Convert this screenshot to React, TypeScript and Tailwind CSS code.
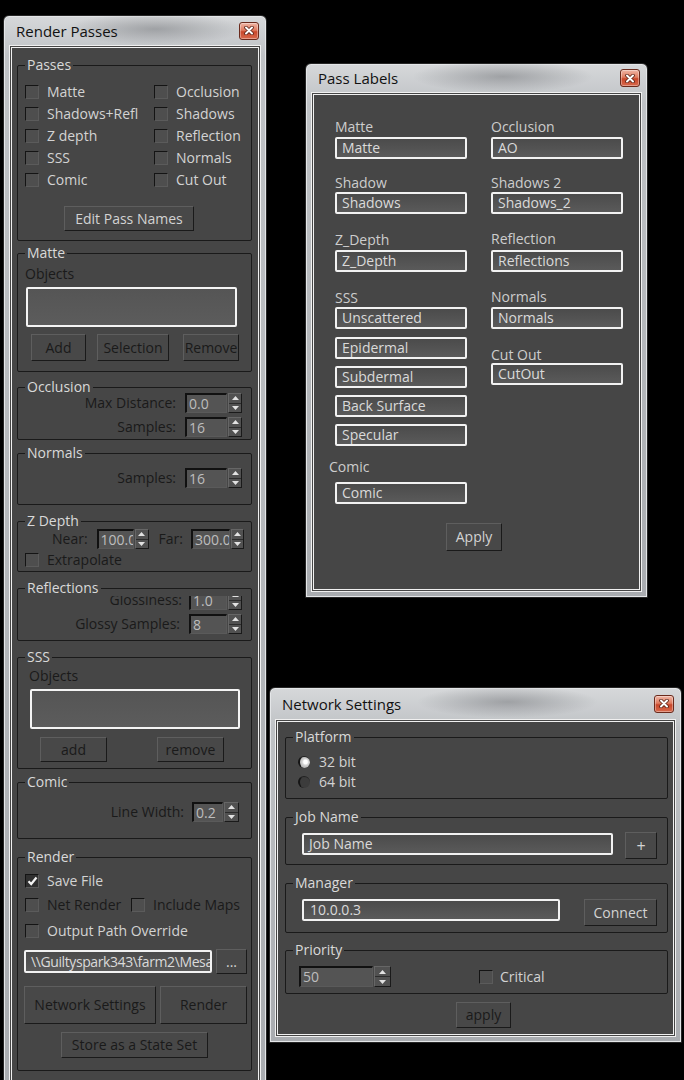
import React from 'react'

const light = 'text-[#d3d3d3]'
const dark = 'text-[#1a1a1a]'

function CloseBtn() {
  return (
    <div className="flex h-[18px] w-[20px] items-center justify-center rounded-[3px] border border-[#6a2a1c] bg-[linear-gradient(180deg,#efb6a6_0%,#df7c61_45%,#c8472b_55%,#d8694c_100%)] shadow-[inset_0_0_0_1px_rgba(255,255,255,0.35)]">
      <svg width="10" height="9" viewBox="0 0 10 9">
        <path d="M2 1.5 L8 7.5 M8 1.5 L2 7.5" stroke="#5a2216" strokeWidth="3.6" strokeLinecap="round" />
        <path d="M2 1.5 L8 7.5 M8 1.5 L2 7.5" stroke="#ffffff" strokeWidth="2" strokeLinecap="round" />
      </svg>
    </div>
  )
}

interface WindowProps {
  title: string
  className: string
  titleH: string
  children: React.ReactNode
}

function Window({ title, className, titleH, children }: WindowProps) {
  return (
    <div
      className={`absolute flex flex-col rounded-t-[6px] border border-[#262626] bg-[linear-gradient(180deg,#d6d8da_0px,#bfc2c5_40px,#a9acb0_100%)] px-[5px] pb-[5px] shadow-[inset_0_0_0_1px_#e4e6e8] ${className}`}
    >
      <div
        className={`flex shrink-0 items-center justify-between bg-[radial-gradient(ellipse_90px_16px_at_58%_45%,rgba(120,122,126,0.55),transparent)] pl-[7px] pr-[2px] ${titleH}`}
      >
        <span className="text-[15px] leading-5 text-[#111]">{title}</span>
        <CloseBtn />
      </div>
      <div className="min-h-0 flex-1 overflow-hidden border-[3px] border-double border-[#f0f0f0] bg-[#464646]">
        {children}
      </div>
    </div>
  )
}

function Group({ label, className, children }: { label: string; className?: string; children?: React.ReactNode }) {
  return (
    <fieldset className={`shrink-0 rounded-[2px] border border-[#1a1a1a] ${className ?? ''}`}>
      <legend className="ml-[7px] px-[2px] text-[14px] leading-4 text-[#d9d9d9]">{label}</legend>
      {children}
    </fieldset>
  )
}

function Check({ checked }: { checked?: boolean }) {
  return (
    <span
      className={`flex h-[14px] w-[14px] shrink-0 items-center justify-center border-t border-l border-r border-b border-t-[#141414] border-l-[#141414] border-r-[#5b5b5b] border-b-[#5b5b5b] ${checked ? 'bg-[#303030]' : 'bg-[#4e4e4e]'}`}
    >
      {checked && (
        <svg width="11" height="10" viewBox="0 0 11 10">
          <path d="M1.5 5.2 L4.2 8 L9.5 1.5" fill="none" stroke="#f4f4f4" strokeWidth="2.2" />
        </svg>
      )}
    </span>
  )
}

function Radio({ on }: { on?: boolean }) {
  return (
    <span
      className={`h-[12px] w-[12px] shrink-0 rounded-full border-l-2 border-t border-l-[#151515] border-t-[#222] ${on ? 'bg-[radial-gradient(circle_at_55%_45%,#ffffff_0_22%,#d4d4d4_40%,#9a9a9a_100%)]' : 'bg-[#3c3c3c]'}`}
    />
  )
}

function Btn({ children, className, lit }: { children: React.ReactNode; className?: string; lit?: boolean }) {
  return (
    <button
      type="button"
      className={`flex shrink-0 items-center justify-center border-t border-l border-r border-b border-t-[#5e5e5e] border-l-[#5e5e5e] border-r-[#1a1a1a] border-b-[#1a1a1a] bg-[#484848] text-[14px] leading-4 ${lit ? light : dark} ${className ?? ''}`}
    >
      {children}
    </button>
  )
}

function Arrows({ w }: { w: string }) {
  return (
    <div className={`ml-[1px] flex shrink-0 flex-col border-t border-l border-r border-b border-t-[#666] border-l-[#666] border-r-[#1a1a1a] border-b-[#1a1a1a] bg-[#515151] ${w}`}>
      <div className="flex flex-1 items-center justify-center">
        <svg width="7" height="4" viewBox="0 0 7 4">
          <path d="M0 4 L3.5 0 L7 4Z" fill="#e2e2e2" />
        </svg>
      </div>
      <div className="h-px bg-[#2c2c2c]" />
      <div className="flex flex-1 items-center justify-center">
        <svg width="7" height="4" viewBox="0 0 7 4">
          <path d="M0 0 L3.5 4 L7 0Z" fill="#e2e2e2" />
        </svg>
      </div>
    </div>
  )
}

function SpinBox({ value, w, aw, h }: { value: string; w: string; aw: string; h: string }) {
  return (
    <div className={`flex shrink-0 ${h}`}>
      <div
        className={`flex items-center overflow-hidden whitespace-nowrap border-t-2 border-l-2 border-r border-b border-t-[#111] border-l-[#111] border-r-[#5a5a5a] border-b-[#5a5a5a] bg-[#545454] pl-[2px] text-[14px] leading-4 text-[#bdbdbd] ${w}`}
      >
        {value}
      </div>
      <Arrows w={aw} />
    </div>
  )
}

function SpinRow({ label, value, w, aw, gap, className }: { label: string; value: string; w: string; aw: string; gap: string; className?: string }) {
  return (
    <div className={`flex h-[20px] items-center justify-end ${className ?? ''}`}>
      <span className={`text-[14px] leading-4 ${dark}`}>{label}</span>
      <div className={gap}>
        <SpinBox value={value} w={w} aw={aw} h="h-[20px]" />
      </div>
    </div>
  )
}

function TField({ value, className }: { value: string; className?: string }) {
  return (
    <div
      className={`flex shrink-0 items-center overflow-hidden whitespace-nowrap rounded-[2px] border-2 border-[#f2f2f2] bg-[linear-gradient(180deg,#4b4b4b,#5a5a5a)] pl-[5px] text-[14px] leading-4 text-[#dadada] ${className ?? ''}`}
    >
      {value}
    </div>
  )
}

function ListBox({ className }: { className?: string }) {
  return <div className={`shrink-0 rounded-[2px] border-2 border-[#f4f4f4] bg-[linear-gradient(180deg,#555,#5c5c5c)] ${className ?? ''}`} />
}

const passes = ['Matte', 'Occlusion', 'Shadows+Refl', 'Shadows', 'Z depth', 'Reflection', 'SSS', 'Normals', 'Comic', 'Cut Out']

function RenderPasses() {
  return (
    <Window title="Render Passes" className="left-[3px] top-[15px] h-[1090px] w-[264px]" titleH="h-[29px]">
      <div className="flex flex-col pl-[5px] pr-[6px] pt-[9px]">
        <Group label="Passes" className="h-[184px]">
          <div className="mt-[8px] grid grid-cols-[129px_auto] pl-[7px]">
            {passes.map((p) => (
              <div key={p} className="flex h-[22px] items-center gap-[8px]">
                <Check />
                <span className={`whitespace-nowrap text-[14px] leading-4 ${light}`}>{p}</span>
              </div>
            ))}
          </div>
          <Btn lit className="ml-[46px] mt-[15px] h-[25px] w-[130px]">
            Edit Pass Names
          </Btn>
        </Group>

        <Group label="Matte" className="mt-[4px] h-[127px]">
          <div className={`mt-[5px] pl-[7px] text-[14px] leading-4 ${dark}`}>Objects</div>
          <ListBox className="ml-[8px] mt-[5px] h-[40px] w-[211px]" />
          <div className="ml-[13px] mt-[7px] flex">
            <Btn className="h-[27px] w-[55px]">Add</Btn>
            <Btn className="ml-[11px] h-[27px] w-[72px]">Selection</Btn>
            <Btn className="ml-[14px] h-[27px] w-[56px]">Remove</Btn>
          </div>
        </Group>

        <Group label="Occlusion" className="mt-[7px] h-[61px]">
          <div className="-mt-[2px] flex flex-col pr-[9px]">
            <SpinRow label="Max Distance:" value="0.0" w="w-[42px]" aw="w-[14px]" gap="ml-[9px]" />
            <SpinRow label="Samples:" value="16" w="w-[42px]" aw="w-[14px]" gap="ml-[9px]" className="mt-[4px]" />
          </div>
        </Group>

        <Group label="Normals" className="mt-[5px] h-[60px]">
          <div className="mt-[7px] flex flex-col pr-[9px]">
            <SpinRow label="Samples:" value="16" w="w-[42px]" aw="w-[14px]" gap="ml-[9px]" />
          </div>
        </Group>

        <Group label="Z Depth" className="mt-[8px] h-[59px]">
          <div className="flex h-[20px] items-center pl-[34px]">
            <span className={`text-[14px] leading-4 ${dark}`}>Near:</span>
            <div className="ml-[9px]">
              <SpinBox value="100.0" w="w-[37px]" aw="w-[14px]" h="h-[20px]" />
            </div>
            <span className={`ml-[10px] text-[14px] leading-4 ${dark}`}>Far:</span>
            <div className="ml-[8px]">
              <SpinBox value="300.0" w="w-[39px]" aw="w-[13px]" h="h-[20px]" />
            </div>
          </div>
          <div className="mt-[1px] flex h-[20px] items-center gap-[8px] pl-[7px]">
            <Check />
            <span className={`text-[14px] leading-4 ${dark}`}>Extrapolate</span>
          </div>
        </Group>

        <Group label="Reflections" className="mt-[8px] h-[61px]">
          <div className="h-[40px] overflow-hidden">
            <div className="-mt-[6px] flex flex-col pr-[9px]">
              <SpinRow label="Glossiness:" value="1.0" w="w-[38px]" aw="w-[14px]" gap="ml-[7px]" />
              <SpinRow label="Glossy Samples:" value="8" w="w-[38px]" aw="w-[14px]" gap="ml-[9px]" className="mt-[4px]" />
            </div>
          </div>
        </Group>

        <Group label="SSS" className="mt-[8px] h-[120px]">
          <div className={`mt-[3px] pl-[11px] text-[14px] leading-4 ${dark}`}>Objects</div>
          <ListBox className="ml-[12px] mt-[5px] h-[40px] w-[210px]" />
          <div className="ml-[22px] mt-[8px] flex">
            <Btn className="h-[25px] w-[67px]">add</Btn>
            <Btn className="ml-[50px] h-[25px] w-[67px]">remove</Btn>
          </div>
        </Group>

        <Group label="Comic" className="mt-[5px] h-[65px]">
          <div className="mt-[12px] flex flex-col pr-[12px]">
            <SpinRow label="Line Width:" value="0.2" w="w-[31px]" aw="w-[15px]" gap="ml-[8px]" />
          </div>
        </Group>

        <Group label="Render" className="mt-[10px] h-[222px]">
          <div className="mt-[6px] flex h-[20px] items-center gap-[8px] pl-[7px]">
            <Check checked />
            <span className={`text-[14px] leading-4 ${light}`}>Save File</span>
          </div>
          <div className="mt-[4px] flex h-[20px] items-center pl-[7px]">
            <div className="flex w-[106px] items-center gap-[8px]">
              <Check />
              <span className={`text-[14px] leading-4 ${dark}`}>Net Render</span>
            </div>
            <div className="flex items-center gap-[8px]">
              <Check />
              <span className={`whitespace-nowrap text-[14px] leading-4 ${dark}`}>Include Maps</span>
            </div>
          </div>
          <div className="mt-[6px] flex h-[20px] items-center gap-[8px] pl-[7px]">
            <Check />
            <span className={`text-[14px] leading-4 ${light}`}>Output Path Override</span>
          </div>
          <div className="ml-[6px] mt-[8px] flex items-center">
            <TField value={'\\\\Guiltyspark343\\farm2\\Mesa'} className="h-[23px] w-[188px] pl-[1px] tracking-[-0.4px]" />
            <Btn lit className="ml-[4px] h-[25px] w-[31px]">
              ...
            </Btn>
          </div>
          <div className="ml-[6px] mt-[12px] flex">
            <Btn className="h-[38px] w-[132px]">Network Settings</Btn>
            <Btn className="ml-[4px] h-[38px] w-[87px]">Render</Btn>
          </div>
          <Btn className="ml-[43px] mt-[8px] h-[26px] w-[147px]">Store as a State Set</Btn>
        </Group>
      </div>
    </Window>
  )
}

function Lbl({ children, className }: { children: React.ReactNode; className?: string }) {
  return <div className={`text-[14px] leading-4 text-[#cdcdcd] ${className ?? ''}`}>{children}</div>
}

function PassLabels() {
  return (
    <Window title="Pass Labels" className="left-[305px] top-[63px] h-[535px] w-[343px]" titleH="h-[28px]">
      <div className="flex flex-col">
        <div className="flex pl-[21px]">
          <div className="flex w-[156px] flex-col">
            <Lbl className="mt-[24px]">Matte</Lbl>
            <TField value="Matte" className="mt-[2px] h-[22px] w-[132px]" />
            <Lbl className="mt-[16px]">Shadow</Lbl>
            <TField value="Shadows" className="mt-[1px] h-[22px] w-[132px]" />
            <Lbl className="mt-[18px]">Z_Depth</Lbl>
            <TField value="Z_Depth" className="mt-[2px] h-[22px] w-[132px]" />
            <Lbl className="mt-[18px]">SSS</Lbl>
            <TField value="Unscattered" className="mt-[1px] h-[22px] w-[132px]" />
            <TField value="Epidermal" className="mt-[8px] h-[22px] w-[132px]" />
            <TField value="Subdermal" className="mt-[7px] h-[22px] w-[132px]" />
            <TField value="Back Surface" className="mt-[7px] h-[22px] w-[132px]" />
            <TField value="Specular" className="mt-[7px] h-[22px] w-[132px]" />
            <Lbl className="-ml-[6px] mt-[13px]">Comic</Lbl>
            <TField value="Comic" className="mt-[7px] h-[22px] w-[132px]" />
          </div>
          <div className="flex flex-col">
            <Lbl className="mt-[24px]">Occlusion</Lbl>
            <TField value="AO" className="mt-[2px] h-[22px] w-[132px]" />
            <Lbl className="mt-[16px]">Shadows 2</Lbl>
            <TField value="Shadows_2" className="mt-[1px] h-[22px] w-[132px]" />
            <Lbl className="mt-[17px]">Reflection</Lbl>
            <TField value="Reflections" className="mt-[3px] h-[22px] w-[132px]" />
            <Lbl className="mt-[17px]">Normals</Lbl>
            <TField value="Normals" className="mt-[2px] h-[22px] w-[132px]" />
            <Lbl className="mt-[18px]">Cut Out</Lbl>
            <TField value="CutOut" className="mt-0 h-[22px] w-[132px]" />
          </div>
        </div>
        <Btn lit className="ml-[132px] mt-[19px] h-[28px] w-[56px]">
          Apply
        </Btn>
      </div>
    </Window>
  )
}

function NetworkSettings() {
  return (
    <Window title="Network Settings" className="left-[269px] top-[687px] h-[356px] w-[413px]" titleH="h-[31px]">
      <div className="flex flex-col pl-[7px] pr-[5px] pt-[7px]">
        <Group label="Platform" className="h-[70px]">
          <div className="mt-[7px] flex h-[20px] items-center gap-[9px] pl-[12px]">
            <Radio on />
            <span className={`text-[14px] leading-4 ${light}`}>32 bit</span>
          </div>
          <div className="flex h-[20px] items-center gap-[9px] pl-[12px]">
            <Radio />
            <span className={`text-[14px] leading-4 ${light}`}>64 bit</span>
          </div>
        </Group>

        <Group label="Job Name" className="mt-[10px] h-[56px]">
          <div className="ml-[16px] mt-[7px] flex items-start">
            <TField value="Job Name" className="mt-[1px] h-[22px] w-[311px]" />
            <Btn lit className="ml-[12px] h-[27px] w-[32px] text-[16px]">
              +
            </Btn>
          </div>
        </Group>

        <Group label="Manager" className="mt-[10px] h-[58px]">
          <div className="ml-[16px] mt-[8px] flex items-start">
            <TField value="10.0.0.3" className="h-[22px] w-[258px] pl-[6px]" />
            <Btn lit className="ml-[24px] h-[27px] w-[73px]">
              Connect
            </Btn>
          </div>
        </Group>

        <Group label="Priority" className="mt-[9px] h-[52px]">
          <div className="ml-[13px] mt-[8px] flex items-center">
            <SpinBox value="50" w="w-[74px]" aw="w-[17px]" h="h-[21px]" />
            <div className="ml-[88px] flex items-center gap-[7px]">
              <Check />
              <span className={`text-[14px] leading-4 ${light}`}>Critical</span>
            </div>
          </div>
        </Group>

        <Btn className="ml-[171px] mt-[8px] h-[26px] w-[55px]">apply</Btn>
      </div>
    </Window>
  )
}

export default function App() {
  return (
    <div className="relative h-[1080px] w-[684px] overflow-hidden bg-black font-['Open_Sans',sans-serif]">
      <RenderPasses />
      <PassLabels />
      <NetworkSettings />
    </div>
  )
}
